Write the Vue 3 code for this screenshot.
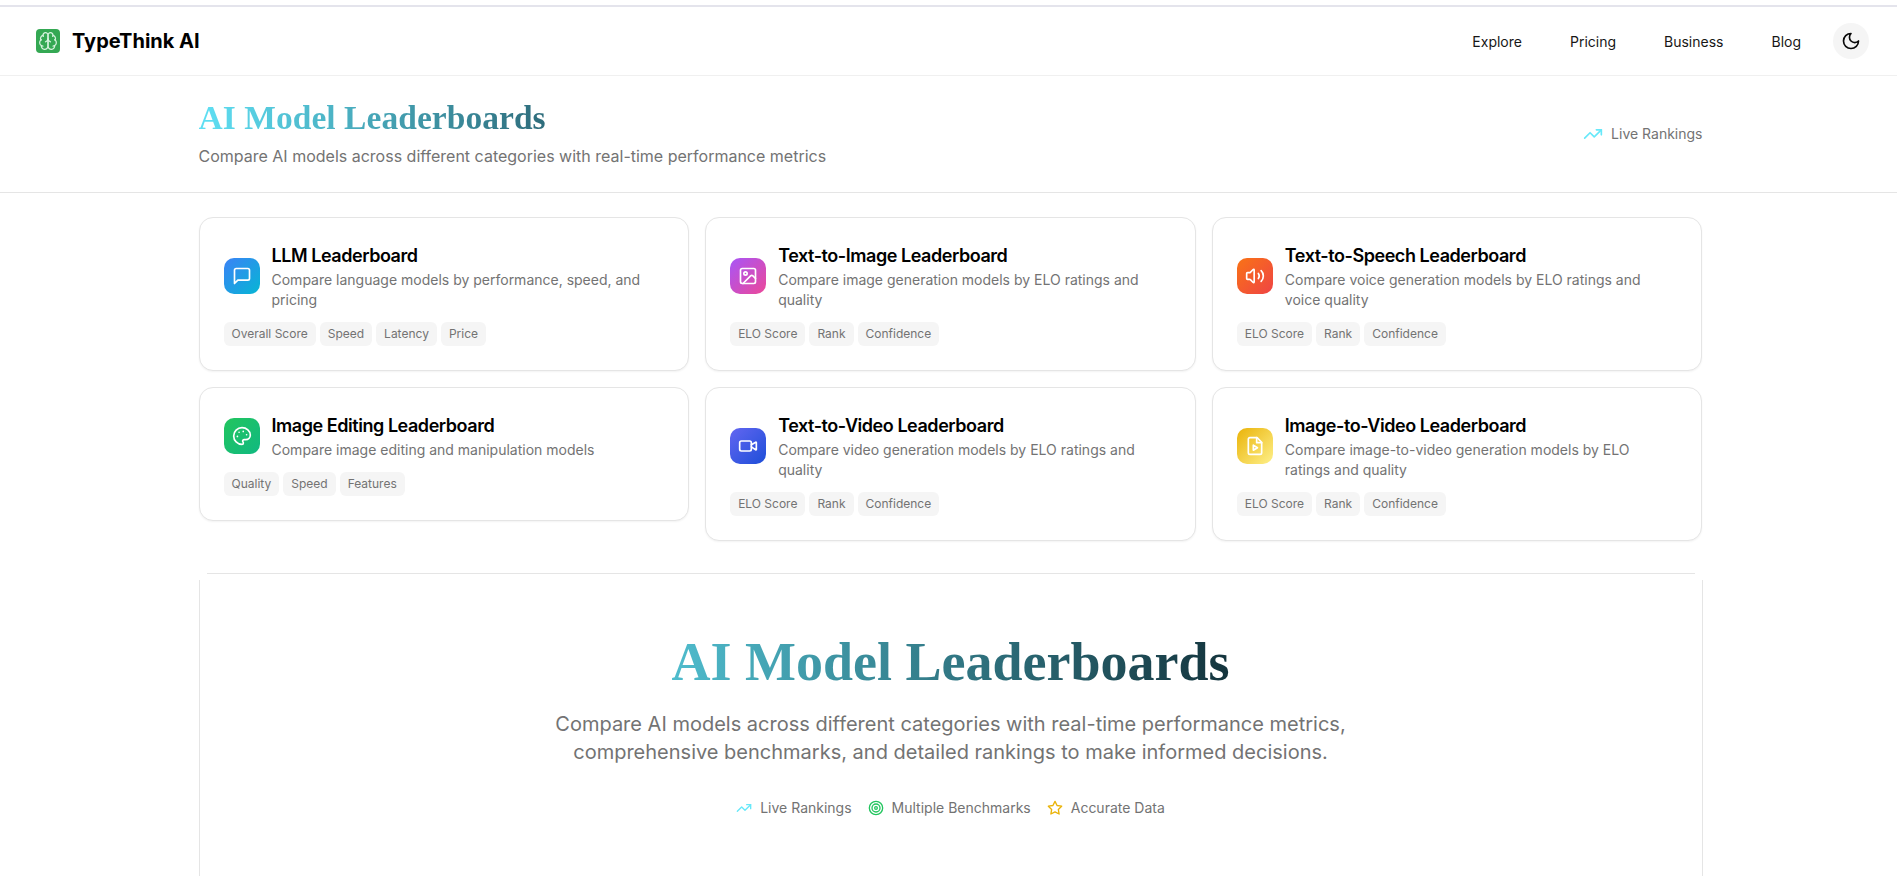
<script setup>
const icons = {
  chat: ['M21 15a2 2 0 0 1-2 2H7l-4 4V5a2 2 0 0 1 2-2h14a2 2 0 0 1 2 2z'],
  image: ['M5 3h14a2 2 0 0 1 2 2v14a2 2 0 0 1-2 2H5a2 2 0 0 1-2-2V5a2 2 0 0 1 2-2z', 'M7 9a2 2 0 1 0 4 0 2 2 0 1 0-4 0', 'm21 15-3.086-3.086a2 2 0 0 0-2.828 0L6 21'],
  volume: ['M11 4.702a.705.705 0 0 0-1.203-.498L6.413 7.587A1.4 1.4 0 0 1 5.416 8H3a1 1 0 0 0-1 1v6a1 1 0 0 0 1 1h2.416a1.4 1.4 0 0 1 .997.413l3.383 3.384A.705.705 0 0 0 11 19.298z', 'M16 9a5 5 0 0 1 0 6', 'M19.364 18.364a9 9 0 0 0 0-12.728'],
  palette: ['M13.5 6.5h.01', 'M17.5 10.5h.01', 'M8.5 7.5h.01', 'M6.5 12.5h.01', 'M12 2C6.5 2 2 6.5 2 12s4.5 10 10 10c.926 0 1.648-.746 1.648-1.688 0-.437-.18-.835-.437-1.125-.29-.289-.438-.652-.438-1.125a1.64 1.64 0 0 1 1.668-1.668h1.996c3.051 0 5.555-2.503 5.555-5.554C21.965 6.012 17.461 2 12 2z'],
  video: ['m16 13 5.223 3.482a.5.5 0 0 0 .777-.416V7.87a.5.5 0 0 0-.752-.432L16 10.5', 'M4 6h10a2 2 0 0 1 2 2v8a2 2 0 0 1-2 2H4a2 2 0 0 1-2-2V8a2 2 0 0 1 2-2z'],
  file: ['M14.5 2H6a2 2 0 0 0-2 2v16a2 2 0 0 0 2 2h12a2 2 0 0 0 2-2V7.5L14.5 2z', 'M14 2v6h6', 'm10 11 5 3-5 3v-6z'],
  trend: ['M22 7 13.5 15.5 8.5 10.5 2 17', 'M16 7h6v6'],
  target: ['M2 12a10 10 0 1 0 20 0 10 10 0 1 0-20 0', 'M6 12a6 6 0 1 0 12 0 6 6 0 1 0-12 0', 'M10 12a2 2 0 1 0 4 0 2 2 0 1 0-4 0'],
  star: ['M12 2 15.09 8.26 22 9.27 17 14.14 18.18 21.02 12 17.77 5.82 21.02 7 14.14 2 9.27 8.91 8.26z'],
  moon: ['M12 3a6 6 0 0 0 9 9 9 9 0 1 1-9-9Z'],
  brain: ['M12 5a3 3 0 1 0-5.997.125 4 4 0 0 0-2.526 5.77 4 4 0 0 0 .556 6.588A4 4 0 1 0 12 18Z', 'M12 5a3 3 0 1 1 5.997.125 4 4 0 0 1 2.526 5.77 4 4 0 0 1-.556 6.588A4 4 0 1 1 12 18Z', 'M15 13a4.5 4.5 0 0 1-3-4 4.5 4.5 0 0 1-3 4', 'M17.599 6.5a3 3 0 0 0 .399-1.375', 'M6.003 5.125A3 3 0 0 0 6.401 6.5', 'M3.477 10.896a4 4 0 0 1 .585-.396', 'M19.938 10.5a4 4 0 0 1 .585.396', 'M6 18a4 4 0 0 1-1.967-.516', 'M19.967 17.484A4 4 0 0 1 18 18']
}

const navLinks = ['Explore', 'Pricing', 'Business', 'Blog']
const elo = ['ELO Score', 'Rank', 'Confidence']

const boards = [
  { title: 'LLM Leaderboard', desc: 'Compare language models by performance, speed, and pricing', icon: 'chat', tone: 'blue', tags: ['Overall Score', 'Speed', 'Latency', 'Price'] },
  { title: 'Text-to-Image Leaderboard', desc: 'Compare image generation models by ELO ratings and quality', icon: 'image', tone: 'purple', tags: elo },
  { title: 'Text-to-Speech Leaderboard', desc: 'Compare voice generation models by ELO ratings and voice quality', icon: 'volume', tone: 'orange', tags: elo },
  { title: 'Image Editing Leaderboard', desc: 'Compare image editing and manipulation models', icon: 'palette', tone: 'green', tags: ['Quality', 'Speed', 'Features'] },
  { title: 'Text-to-Video Leaderboard', desc: 'Compare video generation models by ELO ratings and quality', icon: 'video', tone: 'indigo', tags: elo },
  { title: 'Image-to-Video Leaderboard', desc: 'Compare image-to-video generation models by ELO ratings and quality', icon: 'file', tone: 'yellow', tags: elo }
]

const features = [
  { label: 'Live Rankings', icon: 'trend', color: '#67e8f9' },
  { label: 'Multiple Benchmarks', icon: 'target', color: '#22c55e' },
  { label: 'Accurate Data', icon: 'star', color: '#eab308' }
]
</script>

<template>
  <div class="page">
    <nav class="nav">
      <div class="brand">
        <span class="logo">
          <svg class="logo-svg" viewBox="0 0 24 24" fill="none" stroke="currentColor" stroke-width="1.5" stroke-linecap="round" stroke-linejoin="round">
            <path v-for="d in icons.brain" :key="d" :d="d" />
          </svg>
        </span>
        <span class="brand-name">TypeThink AI</span>
      </div>
      <div class="nav-links">
        <a v-for="link in navLinks" :key="link" class="nav-link">{{ link }}</a>
        <button class="theme-btn" type="button" aria-label="Toggle theme">
          <svg class="moon" viewBox="0 0 24 24" fill="none" stroke="currentColor" stroke-width="2" stroke-linecap="round" stroke-linejoin="round">
            <path v-for="d in icons.moon" :key="d" :d="d" />
          </svg>
        </button>
      </div>
    </nav>

    <header class="head">
      <div class="wrap head-row">
        <div>
          <h1 class="head-title">AI Model Leaderboards</h1>
          <p class="head-sub">Compare AI models across different categories with real-time performance metrics</p>
        </div>
        <div class="live">
          <svg class="live-icon" viewBox="0 0 24 24" fill="none" stroke="#67e8f9" stroke-width="2" stroke-linecap="round" stroke-linejoin="round">
            <path v-for="d in icons.trend" :key="d" :d="d" />
          </svg>
          <span>Live Rankings</span>
        </div>
      </div>
    </header>

    <main class="wrap main">
      <section class="grid">
        <article v-for="b in boards" :key="b.title" class="card">
          <div class="card-top">
            <span class="card-icon" :class="b.tone">
              <svg class="card-svg" viewBox="0 0 24 24" fill="none" stroke="currentColor" stroke-width="2" stroke-linecap="round" stroke-linejoin="round">
                <path v-for="d in icons[b.icon]" :key="d" :d="d" />
              </svg>
            </span>
            <div class="card-text">
              <h3 class="card-title">{{ b.title }}</h3>
              <p class="card-desc">{{ b.desc }}</p>
            </div>
          </div>
          <div class="tags">
            <span v-for="t in b.tags" :key="t" class="tag">{{ t }}</span>
          </div>
        </article>
      </section>

      <section class="hero">
        <h2 class="hero-title">AI Model Leaderboards</h2>
        <p class="hero-sub">Compare AI models across different categories with real-time performance metrics, comprehensive benchmarks, and detailed rankings to make informed decisions.</p>
        <div class="features">
          <div v-for="f in features" :key="f.label" class="feature">
            <svg class="feature-icon" viewBox="0 0 24 24" fill="none" :stroke="f.color" stroke-width="2" stroke-linecap="round" stroke-linejoin="round">
              <path v-for="d in icons[f.icon]" :key="d" :d="d" />
            </svg>
            <span>{{ f.label }}</span>
          </div>
        </div>
      </section>
    </main>
  </div>
</template>

<style>
html, body { margin: 0; background: #fff; overflow: hidden; }
</style>

<style scoped>
.page {
  height: 876px;
  overflow: hidden;
  padding-top: 5px;
  box-sizing: border-box;
  background: #fff;
  color: #0a0a0a;
  font-family: Inter, "Liberation Sans", sans-serif;
}
.nav {
  height: 68px;
  border-top: 2px solid #e4e4ec;
  border-bottom: 1px solid #f0f0f0;
  display: flex;
  align-items: center;
  justify-content: space-between;
  padding: 0 28px 0 36px;
}
.brand { display: flex; align-items: center; gap: 12px; }
.logo {
  width: 24px;
  height: 24px;
  border-radius: 4px;
  background: #34a853;
  color: #d6f2de;
  display: flex;
  align-items: center;
  justify-content: center;
}
.logo-svg { width: 20px; height: 20px; }
.brand-name { font-size: 20px; font-weight: 700; line-height: 28px; color: #000; }
.nav-links { display: flex; align-items: center; }
.nav-link { font-size: 14px; line-height: 20px; color: #171717; margin: 2px 48px 0 0; }
.nav-link:nth-child(4) { margin-right: 32px; }
.theme-btn {
  width: 36px;
  height: 36px;
  padding: 0;
  border: 0;
  border-radius: 50%;
  background: #f5f5f5;
  color: #0a0a0a;
  display: flex;
  align-items: center;
  justify-content: center;
}
.moon { width: 20px; height: 20px; }
.wrap { width: 1504px; margin-left: 198.5px; box-sizing: border-box; }
.head { border-bottom: 1px solid #e5e5e5; padding: 24px 0; }
.head-row { display: flex; align-items: center; justify-content: space-between; }
.head-title {
  margin: 0 0 8px;
  font-family: "Liberation Serif", serif;
  font-size: 33.5px;
  line-height: 36px;
  letter-spacing: 0.05px;
  font-weight: 700;
  width: max-content;
  background: linear-gradient(90deg, #5fe0f4, #2e6c7b);
  -webkit-background-clip: text;
  background-clip: text;
  color: transparent;
}
.head-sub { margin: 0; font-size: 16px; line-height: 24px; color: #737373; }
.live { display: flex; align-items: center; gap: 8px; font-size: 14px; line-height: 20px; color: #737373; }
.live-icon { width: 20px; height: 20px; }
.main { padding-top: 24px; }
.grid {
  display: grid;
  grid-template-columns: repeat(3, 1fr);
  gap: 16px;
  align-items: start;
}
.card {
  border: 1px solid #e5e5e5;
  border-radius: 14px;
  background: #fff;
  padding: 24px;
  box-shadow: 0 1px 2px rgba(0, 0, 0, 0.05);
}
.card-top { display: flex; align-items: center; gap: 12px; }
.card-icon {
  flex: none;
  width: 36px;
  height: 36px;
  border-radius: 10px;
  color: #fff;
  display: flex;
  align-items: center;
  justify-content: center;
}
.card-svg { width: 20px; height: 20px; }
.blue { background: linear-gradient(135deg, #3b82f6, #06b6d4); }
.purple { background: linear-gradient(135deg, #a855f7, #ec4899); }
.orange { background: linear-gradient(135deg, #f97316, #ef4444); }
.green { background: linear-gradient(135deg, #22c55e, #10b981); }
.indigo { background: linear-gradient(135deg, #6366f1, #1d4ed8); }
.yellow { background: linear-gradient(135deg, #eab308, #fef08a); }
.card-title { margin: 0; font-size: 18px; line-height: 28px; letter-spacing: -0.45px; font-weight: 600; color: #000; }
.card-desc { margin: 0; font-size: 14px; line-height: 20px; color: #737373; }
.tags { display: flex; gap: 4px; margin-top: 12px; }
.tag {
  font-size: 12px;
  line-height: 24px;
  height: 24px;
  padding: 0 8px;
  border-radius: 6px;
  background: #f5f5f5;
  color: #737373;
}
.hero {
  position: relative;
  margin-top: 32px;
  height: 420px;
  box-sizing: border-box;
  border: 1px solid #e5e5e5;
  padding-top: 64px;
  display: flex;
  flex-direction: column;
  align-items: center;
  text-align: center;
}
.hero::before,
.hero::after {
  content: "";
  position: absolute;
  top: -1px;
  width: 8px;
  height: 7px;
  background: #fff;
}
.hero::before { left: -1px; }
.hero::after { right: -1px; }
.hero-title {
  margin: 0 0 24px;
  font-family: "Liberation Serif", serif;
  font-size: 54px;
  line-height: 48px;
  letter-spacing: 0;
  font-weight: 700;
  background: linear-gradient(90deg, #4fbccd, #14343d);
  -webkit-background-clip: text;
  background-clip: text;
  color: transparent;
}
.hero-sub { margin: 0 0 32px; max-width: 800px; font-size: 20px; line-height: 28px; color: #737373; }
.features { display: flex; gap: 16px; font-size: 14px; line-height: 20px; color: #737373; }
.feature { display: flex; align-items: center; gap: 8px; }
.feature-icon { width: 16px; height: 16px; }
</style>
